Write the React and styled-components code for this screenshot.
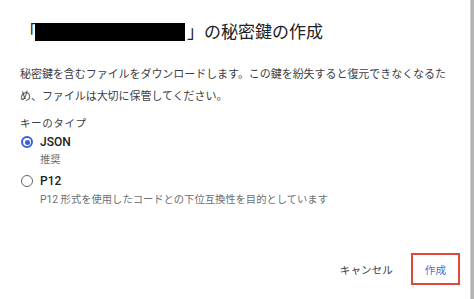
import styled, { createGlobalStyle } from 'styled-components'
import { useState } from 'react'

const GlobalStyle = createGlobalStyle`
  html, body {
    margin: 0;
    padding: 0;
    background: #fff;
  }
  body {
    font-family: Roboto, "Noto Sans CJK JP", "Noto Sans", sans-serif;
    -webkit-font-smoothing: antialiased;
  }
`

const Page = styled.div`
  display: flex;
  width: 474px;
  height: 299px;
  overflow: hidden;
`

const Dialog = styled.div`
  box-sizing: border-box;
  width: 470px;
  height: 299px;
  padding: 20px 10px 14px 20px;
  display: flex;
  flex-direction: column;
  background: #fff;
`

const Edge = styled.div`
  flex: 1;
  background: #b4b4b4;
  border-left: 1px solid #d0d0d0;
`

const Title = styled.h2`
  margin: 0;
  font-size: 17px;
  line-height: 24px;
  font-weight: 400;
  color: #202124;
  display: flex;
  align-items: center;
  white-space: nowrap;
`

const Redacted = styled.span`
  display: inline-block;
  width: 150px;
  height: 18px;
  background: #000;
  margin-left: -2px;
  margin-right: 2px;
`

const Body = styled.p`
  margin: 20px 10px 0 0;
  font-size: 11px;
  line-height: 22px;
  color: #3c4043;
  letter-spacing: -0.05px;
`

const Label = styled.div`
  margin-top: 8px;
  font-size: 10.5px;
  line-height: 16px;
  color: #3c4043;
  letter-spacing: 0.6px;
`

const Option = styled.label`
  display: flex;
  align-items: center;
  gap: 7px;
  height: 20px;
  margin-top: ${(p) => p.$top}px;
  cursor: pointer;
  font-size: 12px;
  font-weight: 500;
  color: #202124;
`

const Radio = styled.span`
  box-sizing: border-box;
  width: 12px;
  height: 12px;
  margin-left: 1px;
  border-radius: 50%;
  border: ${(p) => (p.$on ? '2px solid #3a62d6' : '1.5px solid #5f6368')};
  display: flex;
  align-items: center;
  justify-content: center;

  &::after {
    content: '';
    display: ${(p) => (p.$on ? 'block' : 'none')};
    width: 5px;
    height: 5px;
    border-radius: 50%;
    background: #3a62d6;
  }
`

const Hint = styled.div`
  padding-left: 20px;
  font-size: 10.3px;
  line-height: ${(p) => p.$lh}px;
  color: #6b6f74;
  letter-spacing: 0;
`

const Footer = styled.div`
  margin-top: auto;
  display: flex;
  justify-content: flex-end;
  align-items: center;
  gap: 8px;
`

const Button = styled.button`
  box-sizing: border-box;
  height: 32px;
  padding: 0 ${(p) => (p.$primary ? 12 : 8)}px;
  background: transparent;
  border: 2px solid ${(p) => (p.$primary ? '#e0473b' : 'transparent')};
  font-family: inherit;
  font-size: 10.6px;
  color: ${(p) => (p.$primary ? '#3f6fd6' : '#3c4043')};
  cursor: pointer;
`

export default function App() {
  const [type, setType] = useState('json')

  return (
    <Page>
      <GlobalStyle />
      <Dialog>
        <Title>
          「<Redacted />」の秘密鍵の作成
        </Title>
        <Body>
          秘密鍵を含むファイルをダウンロードします。この鍵を紛失すると復元できなくなるため、ファイルは大切に保管してください。
        </Body>
        <Label>キーのタイプ</Label>
        <Option $top={0} onClick={() => setType('json')}>
          <Radio $on={type === 'json'} />
          JSON
        </Option>
        <Hint $lh={15}>推奨</Hint>
        <Option $top={4} onClick={() => setType('p12')}>
          <Radio $on={type === 'p12'} />
          P12
        </Option>
        <Hint $lh={18}>P12 形式を使用したコードとの下位互換性を目的としています</Hint>
        <Footer>
          <Button>キャンセル</Button>
          <Button $primary>作成</Button>
        </Footer>
      </Dialog>
      <Edge />
    </Page>
  )
}
